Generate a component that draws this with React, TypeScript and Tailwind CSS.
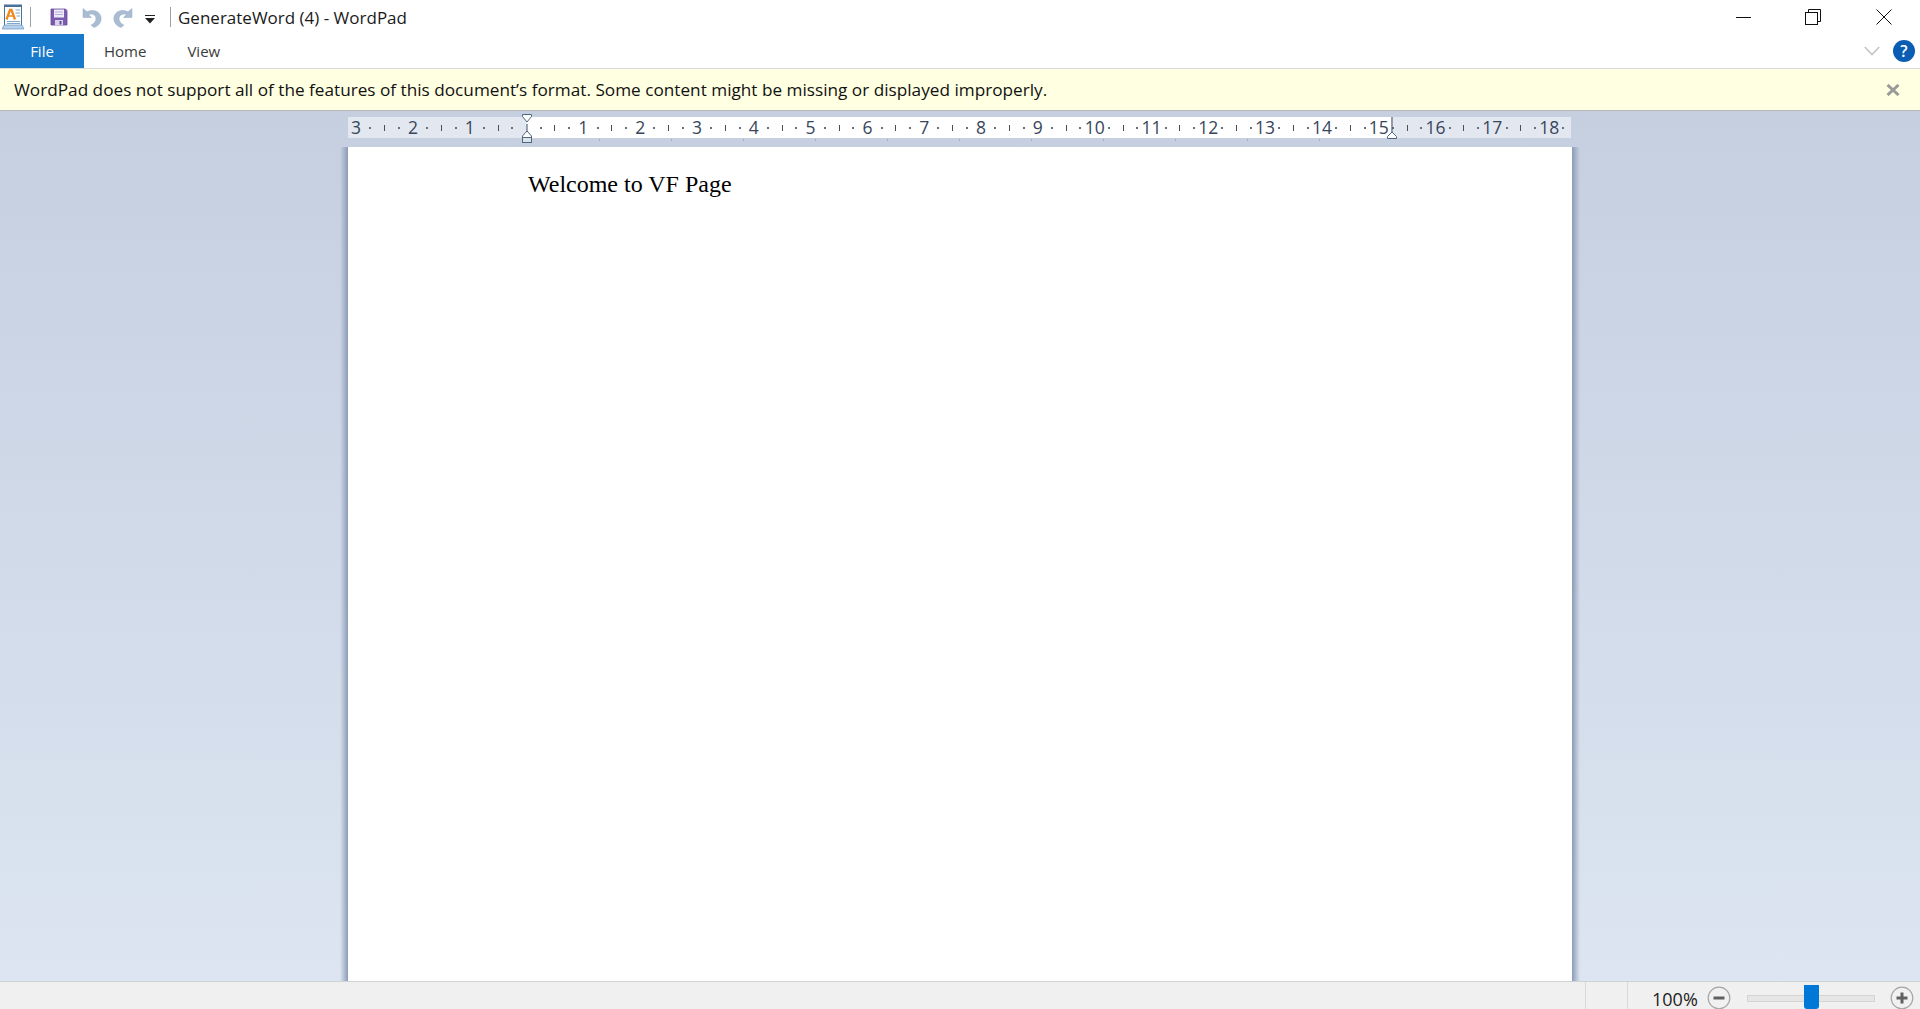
const UI_FONT = "font-['Open_Sans','Noto_Sans',sans-serif]";

const STEP_ITEMS: string[] = [];
for (const n of ['3', '2', '1']) STEP_ITEMS.push(n, '.', '|', '.');
STEP_ITEMS.push(' ', '.', '|', '.');
for (let n = 1; n <= 18; n++) STEP_ITEMS.push(String(n), '.', '|', '.');

const TAB_STOPS = Array.from({ length: 11 }, (_, i) => 251 + i * 72);

function AppIcon() {
  return (
    <svg width="22" height="26" viewBox="0 0 22 26">
      <rect x="2" y="0.5" width="18" height="21" fill="#4a7199" />
      <rect x="3" y="3" width="16" height="18" fill="#fff" />
      <path d="M2 21 L20 21 L22 25 L0 25 Z" fill="#b4d0ec" stroke="#6a93bd" strokeWidth="0.7" />
      <path d="M4.5 15.5 L8 6 L9.5 6 L13 15.5" fill="none" stroke="#ef8a1e" strokeWidth="2.3" />
      <path d="M6.2 12 H11" stroke="#ef8a1e" strokeWidth="1.5" />
      <path d="M13.5 6 H18 M13.5 9 H18 M14.5 12 H18 M5 17.5 H18 M5 19.5 H18" stroke="#7ea6cf" strokeWidth="1" />
    </svg>
  );
}

function SaveIcon() {
  return (
    <svg width="18" height="18" viewBox="0 0 18 18">
      <path d="M1 1 H15.5 L17 2.5 V17 H1 Z" fill="#7b5bb0" stroke="#6a4c9c" strokeWidth="0.8" />
      <rect x="4" y="1.5" width="10" height="8" fill="#ecebf6" />
      <path d="M5 4 H13 M5 6.5 H13" stroke="#b9aedb" strokeWidth="1" />
      <rect x="5" y="12" width="8" height="5" fill="#d9d4ea" />
      <rect x="9.5" y="13" width="2" height="3.5" fill="#6a4c9c" />
    </svg>
  );
}

function UndoIcon({ flip }: { flip?: boolean }) {
  return (
    <svg width="20" height="21" viewBox="0 0 20 21" className={flip ? '-scale-x-100' : ''}>
      <path d="M1 1.5 V10.5 H9.5 L6.6 7.6 C9.5 6.2 13 7.4 13.8 10.4 C14.5 13.4 12.5 16.5 9 18 L12 20.5 C17 19 19.8 14.6 19 10 C18 4.5 11 1.5 5 4.8 Z" fill="#a9bcd2" stroke="#98adc6" strokeWidth="0.5" />
    </svg>
  );
}

function RulerTick({ value }: { value: string }) {
  let mark = null;
  if (value === '.') mark = <span className="h-[2px] w-[2px] bg-[#6a7078]" />;
  else if (value === '|') mark = <span className="h-[6px] w-px bg-[#4a5058]" />;
  else if (value !== ' ') mark = value;
  return (
    <span className="flex w-[14.21px] shrink-0 items-center justify-center overflow-visible whitespace-nowrap text-[17.5px] text-[#37465a]">
      {mark}
    </span>
  );
}

function Ruler() {
  return (
    <div className="relative ml-[348px] mt-[6px] h-[21px] w-[1223px] shrink-0 bg-[linear-gradient(90deg,#e3e7f0_179px,#fff_179px,#fff_1043.5px,#e3e7f0_1043.5px)] pl-px">
      <div className="flex h-full items-center">
        {STEP_ITEMS.slice(0, 86).map((v, i) => (
          <RulerTick key={i} value={v} />
        ))}
      </div>
      {TAB_STOPS.map((left) => (
        <span key={left} className="absolute top-[22px] h-[2px] w-px bg-[#a8adb5]" style={{ left }} />
      ))}
      <svg width="12" height="30" viewBox="0 0 12 30" className="absolute left-[173px] top-[-3px]">
        <path d="M6 10 V20" stroke="#3d5068" strokeWidth="1" />
        <path d="M1.5 0.5 H10.5 V2.5 L6 8 L1.5 2.5 Z" fill="#fff" stroke="#4f6680" strokeWidth="1" />
        <path d="M6 17 L10.5 22 V23.5 H1.5 V22 Z" fill="#fff" stroke="#4f6680" strokeWidth="1" />
        <rect x="1.5" y="23.5" width="9" height="5" fill="#dde3ec" stroke="#4f6680" strokeWidth="1" />
      </svg>
      <svg width="12" height="22" viewBox="0 0 12 22" className="absolute left-[1037.5px] top-0">
        <path d="M6 0 V15" stroke="#3d5068" strokeWidth="1" />
        <path d="M6 15 L10.5 19.5 V21.5 H1.5 V19.5 Z" fill="#fff" stroke="#4f6680" strokeWidth="1" />
      </svg>
    </div>
  );
}

function ZoomButton({ plus }: { plus?: boolean }) {
  return (
    <svg width="24" height="24" viewBox="0 0 24 24" className="shrink-0">
      <circle cx="12" cy="12" r="10.8" fill="#f1f1f1" stroke="#a5a5a5" strokeWidth="1.2" />
      <path d={plus ? 'M6.5 12 H17.5 M12 6.5 V17.5' : 'M6.5 12 H17.5'} stroke="#606060" strokeWidth="3" />
    </svg>
  );
}

export default function App() {
  return (
    <div className={`flex h-[1009px] w-[1920px] flex-col overflow-hidden bg-white ${UI_FONT}`}>
      <div className="flex h-[34px] shrink-0 items-center pl-[2px]">
        <AppIcon />
        <span className="ml-[6px] h-[20px] w-px bg-[#a0a0a0]" />
        <span className="ml-[19px]"><SaveIcon /></span>
        <span className="ml-[14px]"><UndoIcon /></span>
        <span className="ml-[11px]"><UndoIcon flip /></span>
        <svg width="10" height="9" viewBox="0 0 10 9" className="ml-[12px] mt-[5px]">
          <path d="M0 0.5 H10" stroke="#222" strokeWidth="1" />
          <path d="M0 3 H10 L5 8.5 Z" fill="#222" />
        </svg>
        <span className="ml-[15px] h-[20px] w-px bg-[#a0a0a0]" />
        <span className="ml-[7px] mt-px text-[17px] text-[#1a1a1a]">GenerateWord (4) - WordPad</span>
        <div className="ml-auto flex items-center">
          <svg width="16" height="16" viewBox="0 0 16 16" className="mr-[53px]">
            <path d="M0 8.5 H15" stroke="#111" strokeWidth="1" />
          </svg>
          <svg width="16" height="16" viewBox="0 0 16 16" className="mr-[55px]">
            <path d="M3.5 3.5 V0.5 H15.5 V12.5 H12.5" fill="none" stroke="#111" strokeWidth="1" />
            <rect x="0.5" y="3.5" width="12" height="12" fill="#fff" stroke="#111" strokeWidth="1" />
          </svg>
          <svg width="16" height="16" viewBox="0 0 16 16" className="mr-[28px]">
            <path d="M0.5 0.5 L15.5 15.5 M15.5 0.5 L0.5 15.5" stroke="#111" strokeWidth="1" />
          </svg>
        </div>
      </div>

      <div className="flex h-[35px] shrink-0 items-start border-b border-[#d9d9d9]">
        <div className="flex h-[34px] w-[84px] items-center justify-center bg-[#1979ca] text-[15px] text-white">File</div>
        <div className="ml-[20px] flex h-[34px] items-center text-[15px] text-[#3b3b3b]">Home</div>
        <div className="ml-[41px] flex h-[34px] items-center text-[15px] text-[#3b3b3b]">View</div>
        <div className="ml-auto flex h-[34px] items-center pr-[5px]">
          <svg width="16" height="10" viewBox="0 0 16 10" className="mr-[13px]">
            <path d="M0.8 1 L8 8.5 L15.2 1" fill="none" stroke="#c4c4c4" strokeWidth="1.6" />
          </svg>
          <svg width="22" height="22" viewBox="0 0 22 22">
            <circle cx="11" cy="11" r="11" fill="#0b5db3" />
            <text x="11" y="17" textAnchor="middle" fontSize="16" fontWeight="600" fill="#fff">?</text>
          </svg>
        </div>
      </div>

      <div className="flex h-[42px] shrink-0 items-center justify-between border-b border-[#b8b8b8] bg-[#ffffe1] pl-[14px] pr-[20px]">
        <span className="mt-px text-[17.2px] text-[#111]">
          WordPad does not support all of the features of this document’s format. Some content might be missing or displayed improperly.
        </span>
        <svg width="14" height="12" viewBox="0 0 14 12">
          <path d="M1.5 1 L12.5 11 M12.5 1 L1.5 11" stroke="#9a9a9a" strokeWidth="3" />
        </svg>
      </div>

      <div className="flex min-h-0 flex-1 flex-col bg-gradient-to-b from-[#c5cfe0] to-[#dce5f1]">
        <Ruler />
        <div className="ml-[340px] mt-[9px] flex min-h-0 flex-1">
          <div className="w-2 bg-gradient-to-l from-[#8c9bb5] to-transparent" />
          <div className="w-[1224px] bg-white pl-[180px] pt-[20px]">
            <p className="font-['Liberation_Serif',serif] text-[24px] leading-[34px] text-black">Welcome to VF Page</p>
          </div>
          <div className="w-2 bg-gradient-to-r from-[#8c9bb5] to-transparent" />
        </div>
      </div>

      <div className="flex h-[28px] shrink-0 items-stretch border-t border-[#d2d2d2] bg-[#f0f0f0]">
        <span className="ml-[1585px] w-px bg-[#d9d9d9]" />
        <span className="ml-[41px] w-px bg-[#d9d9d9]" />
        <span className="ml-[24px] whitespace-nowrap pt-[7px] text-[18px] leading-[20px] text-[#222]">100%</span>
        <div className="ml-[9px] flex items-center pt-[5px]">
          <ZoomButton />
          <div className="relative ml-[16px] h-[7px] w-[128px] border border-[#d4d4d4] bg-[#e6e6e6]">
            <span className="absolute left-[56px] top-[-11px] h-[24px] w-[15px] rounded-b-[3px] bg-[#0078d7]" />
          </div>
          <span className="ml-[15px]"><ZoomButton plus /></span>
        </div>
      </div>
    </div>
  );
}
